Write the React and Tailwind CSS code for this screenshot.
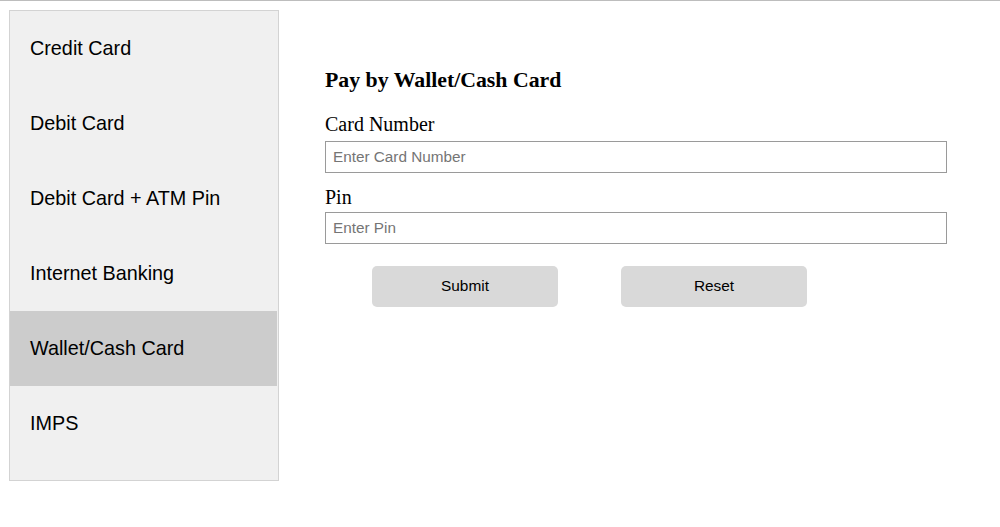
const methods = [
  "Credit Card",
  "Debit Card",
  "Debit Card + ATM Pin",
  "Internet Banking",
  "Wallet/Cash Card",
  "IMPS",
];

export default function App() {
  const active = "Wallet/Cash Card";

  return (
    <div className="min-h-screen bg-white border-t border-[#bdbdbd] flex items-start pt-[9px] pl-[9px]">
      <nav className="w-[270px] h-[471px] border border-[#d3d3d3] bg-[#f0f0f0] font-['Liberation_Sans',Arial,sans-serif] text-[19.8px] text-black">
        {methods.map((m) => (
          <div
            key={m}
            className={
              m === active
                ? "h-[75px] flex items-center pl-5 bg-[#cccccc] mr-px"
                : "h-[75px] flex items-center pl-5"
            }
          >
            {m}
          </div>
        ))}
      </nav>

      <main className="ml-[46px] w-[622px] font-['Liberation_Serif','Times_New_Roman',serif] text-black">
        <h3 className="mt-[58px] text-[21.8px] leading-[25px] font-bold">
          Pay by Wallet/Cash Card
        </h3>

        <label className="block mt-[20px] text-[20px] leading-[23px]">Card Number</label>
        <input
          type="text"
          placeholder="Enter Card Number"
          className="block mt-[5px] w-full h-[32px] border border-[#9a9a9a] px-[7px] text-[15.3px] font-['Liberation_Sans',Arial,sans-serif] placeholder:text-[#757575] outline-none"
        />

        <label className="block mt-[13px] text-[20px] leading-[23px]">Pin</label>
        <input
          type="password"
          placeholder="Enter Pin"
          className="block mt-[3px] w-full h-[32px] border border-[#9a9a9a] px-[7px] text-[15.3px] font-['Liberation_Sans',Arial,sans-serif] placeholder:text-[#757575] outline-none"
        />

        <div className="flex gap-[63px] ml-[47px] mt-[22px] font-['Liberation_Sans',Arial,sans-serif]">
          <button className="w-[186px] h-[41px] pb-[2px] rounded-[5px] bg-[#d9d9d9] text-[15.4px] text-black">
            Submit
          </button>
          <button className="w-[186px] h-[41px] pb-[2px] rounded-[5px] bg-[#d9d9d9] text-[15.4px] text-black">
            Reset
          </button>
        </div>
      </main>
    </div>
  );
}
